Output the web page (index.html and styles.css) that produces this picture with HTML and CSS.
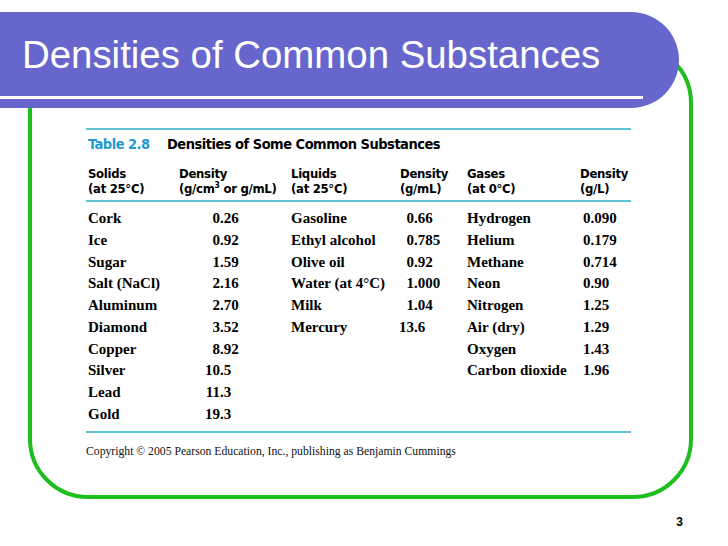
FILE: index.html
```html
<!DOCTYPE html>
<html>
<head>
<meta charset="utf-8">
<link rel="stylesheet" href="styles.css">
</head>
<body>
<div class="slide">
  <header class="banner">
    <h1 class="title">Densities of Common Substances</h1>
    <div class="underline"></div>
  </header>
  <section class="frame">
    <div class="table">
      <div class="rule"></div>
      <div class="caption"><span class="tag">Table 2.8</span><span class="ctext">Densities of Some Common Substances</span></div>
      <div class="row head">
        <div>Solids<br>(at 25°C)</div>
        <div>Density<br>(g/cm<sup>3</sup> or g/mL)</div>
        <div>Liquids<br>(at 25°C)</div>
        <div>Density<br>(g/mL)</div>
        <div>Gases<br>(at 0°C)</div>
        <div>Density<br>(g/L)</div>
      </div>
      <div class="rule"></div>
      <div class="body">
        <div class="row data"><div>Cork</div><div class="n2"><span class="i">0</span>.26</div><div>Gasoline</div><div class="n4"><span class="i">0</span>.66</div><div>Hydrogen</div><div class="n6"><span class="i">0</span>.090</div></div>
        <div class="row data"><div>Ice</div><div class="n2"><span class="i">0</span>.92</div><div>Ethyl alcohol</div><div class="n4"><span class="i">0</span>.785</div><div>Helium</div><div class="n6"><span class="i">0</span>.179</div></div>
        <div class="row data"><div>Sugar</div><div class="n2"><span class="i">1</span>.59</div><div>Olive oil</div><div class="n4"><span class="i">0</span>.92</div><div>Methane</div><div class="n6"><span class="i">0</span>.714</div></div>
        <div class="row data"><div>Salt (NaCl)</div><div class="n2"><span class="i">2</span>.16</div><div>Water (at 4°C)</div><div class="n4"><span class="i">1</span>.000</div><div>Neon</div><div class="n6"><span class="i">0</span>.90</div></div>
        <div class="row data"><div>Aluminum</div><div class="n2"><span class="i">2</span>.70</div><div>Milk</div><div class="n4"><span class="i">1</span>.04</div><div>Nitrogen</div><div class="n6"><span class="i">1</span>.25</div></div>
        <div class="row data"><div>Diamond</div><div class="n2"><span class="i">3</span>.52</div><div>Mercury</div><div class="n4"><span class="i">13</span>.6</div><div>Air (dry)</div><div class="n6"><span class="i">1</span>.29</div></div>
        <div class="row data"><div>Copper</div><div class="n2"><span class="i">8</span>.92</div><div></div><div></div><div>Oxygen</div><div class="n6"><span class="i">1</span>.43</div></div>
        <div class="row data"><div>Silver</div><div class="n2"><span class="i">10</span>.5</div><div></div><div></div><div>Carbon dioxide</div><div class="n6"><span class="i">1</span>.96</div></div>
        <div class="row data"><div>Lead</div><div class="n2"><span class="i">11</span>.3</div><div></div><div></div><div></div><div></div></div>
        <div class="row data"><div>Gold</div><div class="n2"><span class="i">19</span>.3</div><div></div><div></div><div></div><div></div></div>
      </div>
      <div class="rule bottom"></div>
      <p class="copy">Copyright © 2005 Pearson Education, Inc., publishing as Benjamin Cummings</p>
    </div>
  </section>
  <footer class="pageno">3</footer>
</div>
</body>
</html>
```
FILE: styles.css
```css
html, body {
  margin: 0;
  padding: 0;
  background: #ffffff;
}
.slide {
  width: 728px;
  height: 546px;
  overflow: hidden;
  background: #ffffff;
  padding-top: 12px;
  box-sizing: border-box;
}
.banner {
  position: relative;
  z-index: 1;
  width: 679px;
  height: 96px;
  background: #6666cc;
  border-radius: 0 48px 48px 0;
  display: flex;
  flex-direction: column;
}
.title {
  margin: 0;
  padding: 21px 0 0 22px;
  font-family: "Liberation Sans", Arial, sans-serif;
  font-weight: normal;
  font-size: 38.4px;
  line-height: 44px;
  color: #ffffff;
  white-space: nowrap;
}
.underline {
  margin-top: 19px;
  width: 643px;
  height: 3px;
  background: #ffffff;
}
.frame {
  margin: -65px 0 0 28px;
  width: 665px;
  height: 456px;
  box-sizing: border-box;
  border: 4px solid #1ebe1e;
  border-radius: 60px;
  padding: 81px 0 0 54px;
}
.table {
  width: 545px;
}
.rule {
  height: 2px;
  background: #62c3d6;
}
.caption {
  margin-top: 4px;
  padding-left: 2px;
  height: 20px;
  line-height: 20px;
  font-family: "DejaVu Sans Condensed", "Liberation Sans Narrow", "Liberation Sans", sans-serif;
  font-weight: bold;
  font-size: 14.5px;
  letter-spacing: -0.5px;
  color: #000;
  white-space: nowrap;
}
.tag {
  color: #2399d0;
  display: inline-block;
  width: 79px;
}
.row {
  display: grid;
  grid-template-columns: 91px 112px 109px 67px 113px 51px;
  padding-left: 2px;
}
.head {
  margin-top: 12px;
  padding-bottom: 4px;
  font-family: "DejaVu Sans Condensed", "Liberation Sans Narrow", "Liberation Sans", sans-serif;
  font-weight: bold;
  font-size: 13px;
  letter-spacing: -0.3px;
  line-height: 15px;
  white-space: nowrap;
}
.head sup {
  font-size: 8.5px;
  line-height: 0;
  vertical-align: 5px;
}
.body {
  margin-top: 6px;
}
.data {
  height: 21.75px;
  line-height: 21.75px;
  font-family: "Liberation Serif", "Times New Roman", serif;
  font-weight: bold;
  font-size: 15px;
  white-space: nowrap;
}
.i {
  display: inline-block;
  text-align: right;
}
.n2 .i { width: 41px; }
.n4 .i { width: 15px; margin-left: -1px; }
.n6 .i { width: 10.5px; }
.bottom {
  margin-top: 5.5px;
}
.copy {
  margin: 12px 0 0 0;
  font-family: "Liberation Serif", "Times New Roman", serif;
  font-size: 11.7px;
  line-height: 14px;
  color: #111;
  white-space: nowrap;
}
.pageno {
  margin-top: 16px;
  padding-right: 45px;
  text-align: right;
  font-family: "Liberation Sans", Arial, sans-serif;
  font-weight: bold;
  font-size: 12px;
  line-height: 14px;
  color: #000;
}
```
